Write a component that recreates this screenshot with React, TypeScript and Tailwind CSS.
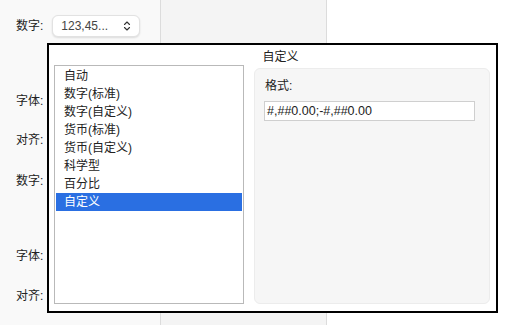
import { ChevronsUpDown } from 'lucide-react';

const formats = ['自动', '数字(标准)', '数字(自定义)', '货币(标准)', '货币(自定义)', '科学型', '百分比', '自定义'];

const font = "font-['Liberation_Sans','Noto_Sans_CJK_SC',sans-serif]";

const Label: React.FC<{ text: string; className?: string }> = ({ text, className }) => (
	<div className={`h-[20px] leading-[20px] text-[12px] text-[#222] ${className ?? ''}`}>{text}</div>
);

const App = () => {
	const selected = '自定义';

	return (
		<div className={`relative w-[510px] h-[325px] overflow-hidden flex bg-white ${font}`}>
			{/* side panel */}
			<div className="w-[161px] h-full bg-[#f9f9f9] border-r border-[#dcdcdc] pl-[16px]">
				<div className="mt-[15px] flex items-center gap-[9px]">
					<Label text="数字:" />
					<div className="w-[88px] h-[22px] bg-white rounded-[6px] border border-[#e2e2e2] shadow-[0_1px_2px_rgba(0,0,0,0.12)] flex items-center justify-between pl-[8px] pr-[6px]">
						<span className="text-[12px] text-[#444] leading-none">123,45...</span>
						<ChevronsUpDown size={12} strokeWidth={2.2} className="text-[#333]" />
					</div>
				</div>
				<Label text="字体:" className="mt-[54px]" />
				<Label text="对齐:" className="mt-[19px]" />
				<Label text="数字:" className="mt-[21px]" />
				<Label text="字体:" className="mt-[55px]" />
				<Label text="对齐:" className="mt-[20px]" />
			</div>
			<div className="w-[166px] h-full bg-[#f4f4f4] border-r border-[#dcdcdc]" />
			<div className="flex-1 h-full bg-white" />

			{/* dialog */}
			<div className="absolute left-[47px] top-[43px] w-[451px] h-[270px] bg-white border-2 border-black flex flex-col px-[5px] pb-[7px]">
				<div className="h-[20px] leading-[25px] text-[12px] text-[#222] text-center pl-[16px]">自定义</div>
				<div className="flex-1 flex gap-[10px]">
					<div className="w-[190px] h-full border border-[#b9b9b9] bg-white pt-[1px] px-px">
						{formats.map((f) => (
							<div
								key={f}
								className={`h-[18px] leading-[18px] text-[12px] pl-[8px] ${
									f === selected ? 'bg-[#2a6fe2] text-white' : 'text-[#222]'
								}`}
							>
								{f}
							</div>
						))}
					</div>
					<div className="flex-1 mt-[3px] mr-[1px] rounded-[6px] bg-[#f6f6f6] border border-[#ececec] px-[9px] pt-[8px]">
						<div className="text-[12px] leading-[18px] text-[#222] pl-[1px]">格式:</div>
						<div className="mt-[6px] w-[211px] h-[20px] bg-white border border-[#cfcfcf] flex items-center px-[2px]">
							<span className="text-[12.5px] text-[#222] leading-none">#,##0.00;-#,##0.00</span>
						</div>
					</div>
				</div>
			</div>
		</div>
	);
};

export default App;
